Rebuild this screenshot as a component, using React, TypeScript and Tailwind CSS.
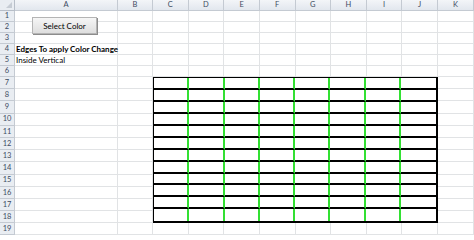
import * as React from 'react';

const cols = ['A', 'B', 'C', 'D', 'E', 'F', 'G', 'H', 'I', 'J', 'K'];
const rowHeights = [11, 11, 11, 11, 11, 11, 12.2, 12.2, 12.2, 12.2, 12.2, 12.2, 12.2, 12.2, 12.2, 12.2, 12.2, 12.2, 12];

const cellText: Record<string, { text: string; bold?: boolean }> = {
  'A4': { text: 'Edges To apply Color Change', bold: true },
  'A5': { text: 'Inside Vertical' },
};

function inTable(col: number, row: number) {
  return col >= 2 && col <= 9 && row >= 7 && row <= 18;
}

export default function App() {
  return (
    <div
      className="relative w-[474px] h-[235px] overflow-hidden bg-white"
      style={{ fontFamily: 'Lato, "Open Sans", sans-serif' }}
    >
      <div className="grid grid-cols-[15px_103px_35px_repeat(8,35.625px)_1fr] grid-rows-[11px_repeat(6,11px)_repeat(12,12.2px)_12px]">
        {/* Corner */}
        <div className="relative bg-[#e9edf2] border-r border-b border-[#b7bec8]">
          <span className="absolute right-[2px] bottom-[2px] w-0 h-0 border-l-[6px] border-l-transparent border-b-[6px] border-b-[#c6ccd4]" />
        </div>
        {/* Column headers */}
        {cols.map((c) => (
          <div
            key={c}
            className="flex items-center justify-center bg-gradient-to-b from-[#f3f5f8] to-[#e2e7ee] border-r border-b border-[#c4cad2] text-[7.5px] text-[#3c4b5f] leading-none"
          >
            {c}
          </div>
        ))}

        {rowHeights.map((_, ri) => {
          const row = ri + 1;
          return (
            <React.Fragment key={row}>
              <div className="flex items-center justify-center bg-[#e9edf2] border-r border-b border-[#c4cad2] text-[7.5px] text-[#3c4b5f] leading-none">
                {row}
              </div>
              {cols.map((c, ci) => {
                if (inTable(ci, row)) return null;
                const content = cellText[`${c}${row}`];
                return (
                  <div
                    key={c}
                    className="relative border-r border-b border-[#e1e3e5] min-w-0"
                  >
                    {content && (
                      <span
                        className={`absolute left-[1px] top-0 h-full flex items-center whitespace-nowrap text-[8px] leading-none text-black ${
                          content.bold ? 'font-bold' : ''
                        }`}
                      >
                        {content.text}
                      </span>
                    )}
                  </div>
                );
              })}
              {row === 7 && (
                <div className="col-start-4 col-end-12 row-start-8 row-end-20 -mt-px -ml-px border-2 border-black grid grid-cols-8 grid-rows-12 bg-white">
                  {Array.from({ length: 96 }).map((_, i) => {
                    const r = Math.floor(i / 8);
                    const c = i % 8;
                    return (
                      <div
                        key={i}
                        className={`${r < 11 ? 'border-b-2 border-b-black' : ''} ${
                          c < 7 ? 'border-r-2 border-r-[#33e033]' : ''
                        }`}
                      />
                    );
                  })}
                </div>
              )}
            </React.Fragment>
          );
        })}
      </div>

      {/* Button floating over the sheet */}
      <button
        type="button"
        className="absolute left-[32px] top-[17px] w-[65px] h-[17px] flex items-center justify-center bg-gradient-to-b from-[#f6f6f6] to-[#dedede] border border-[#b4b4b4] shadow-[1px_1px_0_#8c8c8c] text-[8px] text-black leading-none"
      >
        Select Color
      </button>
    </div>
  );
}
